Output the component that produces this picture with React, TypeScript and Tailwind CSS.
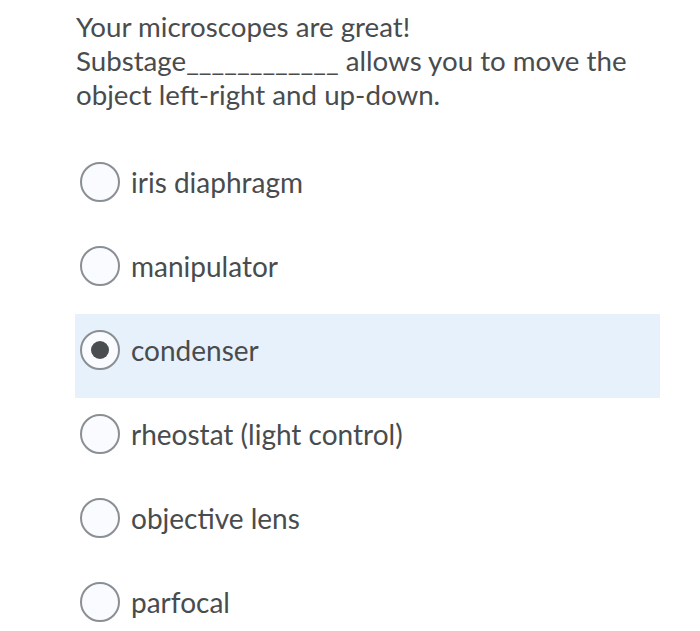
const options = [
  'iris diaphragm',
  'manipulator',
  'condenser',
  'rheostat (light control)',
  'objective lens',
  'parfocal',
];

const selected = 'condenser';

const Radio = ({ checked }: { checked: boolean }) => (
  <span className="flex h-[40px] w-[40px] shrink-0 items-center justify-center rounded-full border-2 border-[#8a8f93] bg-[#f9fbff]">
    {checked && <span className="h-[18px] w-[18px] rounded-full bg-[#4a4d50]" />}
  </span>
);

export default function App() {
  return (
    <div className="min-h-[631px] w-[700px] bg-white font-['Lato',sans-serif] text-[#494c4e]">
      <div className="pl-[76px] pr-[40px] pt-[10px]">
        <p className="text-[27.7px] leading-[34px]">
          Your microscopes are great!
          <br />
          Substage____________ allows you to move the object left-right and up-down.
        </p>
      </div>
      <div className="mt-[34px] ml-[75px] w-[585px]">
        {options.map((opt) => (
          <label
            key={opt}
            className={`flex h-[84px] items-center gap-[11px] pb-[12px] pl-[5px] ${
              opt === selected ? 'bg-[#e6f1fc]' : ''
            }`}
          >
            <Radio checked={opt === selected} />
            <span className="text-[28px]">{opt}</span>
          </label>
        ))}
      </div>
    </div>
  );
}
